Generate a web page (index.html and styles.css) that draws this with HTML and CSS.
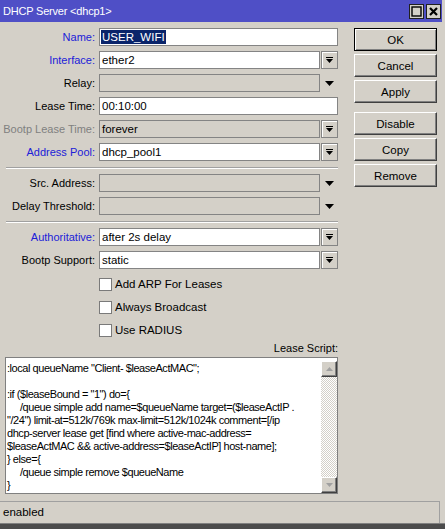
FILE: index.html
```html
<!DOCTYPE html>
<html lang="en">
<head>
    <meta charset="UTF-8">
    <title>DHCP Server &lt;dhcp1&gt;</title>
    <link rel="stylesheet" href="styles.css">
</head>
<body>
<div class="window">
    <div class="titlebar">
        <span class="title">DHCP Server &lt;dhcp1&gt;</span>
        <div class="title-buttons">
            <span class="tbtn"><svg width="11" height="11" viewBox="0 0 11 11"><rect x="1" y="1" width="9" height="9" fill="none" stroke="#000" stroke-width="1.4"/></svg></span>
            <span class="tbtn"><svg width="11" height="11" viewBox="0 0 11 11"><path d="M2 2 L9 9 M9 2 L2 9" stroke="#000" stroke-width="2.2"/></svg></span>
        </div>
    </div>

    <div class="main">
        <div class="form">
            <div class="row">
                <span class="lbl blue">Name:</span>
                <div class="field"><span class="sel">USER_WIFI</span></div>
            </div>
            <div class="row">
                <span class="lbl blue">Interface:</span>
                <div class="combo">
                    <div class="field">ether2</div>
                    <span class="dd"><svg width="7" height="6" viewBox="0 0 7 6"><rect x="0" y="0" width="7" height="1"/><path d="M0 2 H7 L3.5 6 Z"/></svg></span>
                </div>
            </div>
            <div class="row">
                <span class="lbl">Relay:</span>
                <div class="combo">
                    <div class="field off"></div>
                    <span class="dd-flat"><svg width="9" height="5" viewBox="0 0 9 5"><path d="M0 0 H9 L4.5 5 Z"/></svg></span>
                </div>
            </div>
            <div class="row">
                <span class="lbl">Lease Time:</span>
                <div class="field">00:10:00</div>
            </div>
            <div class="row">
                <span class="lbl gray">Bootp Lease Time:</span>
                <div class="combo">
                    <div class="field off">forever</div>
                    <span class="dd"><svg width="7" height="6" viewBox="0 0 7 6"><rect x="0" y="0" width="7" height="1"/><path d="M0 2 H7 L3.5 6 Z"/></svg></span>
                </div>
            </div>
            <div class="row">
                <span class="lbl blue">Address Pool:</span>
                <div class="combo">
                    <div class="field">dhcp_pool1</div>
                    <span class="dd"><svg width="7" height="6" viewBox="0 0 7 6"><rect x="0" y="0" width="7" height="1"/><path d="M0 2 H7 L3.5 6 Z"/></svg></span>
                </div>
            </div>

            <div class="separator"></div>

            <div class="row">
                <span class="lbl">Src. Address:</span>
                <div class="combo">
                    <div class="field off"></div>
                    <span class="dd-flat"><svg width="9" height="5" viewBox="0 0 9 5"><path d="M0 0 H9 L4.5 5 Z"/></svg></span>
                </div>
            </div>
            <div class="row">
                <span class="lbl">Delay Threshold:</span>
                <div class="combo">
                    <div class="field off"></div>
                    <span class="dd-flat"><svg width="9" height="5" viewBox="0 0 9 5"><path d="M0 0 H9 L4.5 5 Z"/></svg></span>
                </div>
            </div>

            <div class="separator"></div>

            <div class="row">
                <span class="lbl blue">Authoritative:</span>
                <div class="combo">
                    <div class="field">after 2s delay</div>
                    <span class="dd"><svg width="7" height="6" viewBox="0 0 7 6"><rect x="0" y="0" width="7" height="1"/><path d="M0 2 H7 L3.5 6 Z"/></svg></span>
                </div>
            </div>
            <div class="row">
                <span class="lbl">Bootp Support:</span>
                <div class="combo">
                    <div class="field">static</div>
                    <span class="dd"><svg width="7" height="6" viewBox="0 0 7 6"><rect x="0" y="0" width="7" height="1"/><path d="M0 2 H7 L3.5 6 Z"/></svg></span>
                </div>
            </div>

            <div class="checks">
                <div class="check"><span class="box"></span>Add ARP For Leases</div>
                <div class="check"><span class="box"></span>Always Broadcast</div>
                <div class="check"><span class="box"></span>Use RADIUS</div>
            </div>

            <div class="script-label">Lease Script:</div>
            <div class="script">
                <div class="script-text">
                    <div>:local queueName "Client- $leaseActMAC";</div>
                    <div>&nbsp;</div>
                    <div>:if ($leaseBound = "1") do={</div>
                    <div class="ind">/queue simple add name=$queueName target=($leaseActIP .</div>
                    <div>"/24") limit-at=512k/769k max-limit=512k/1024k comment=[/ip</div>
                    <div>dhcp-server lease get [find where active-mac-address=</div>
                    <div>$leaseActMAC &amp;&amp; active-address=$leaseActIP] host-name];</div>
                    <div>} else={</div>
                    <div class="ind">/queue simple remove $queueName</div>
                    <div>}</div>
                </div>
                <div class="scrollbar">
                    <span class="sb-btn"><svg width="7" height="4" viewBox="0 0 7 4"><path d="M3.5 0 L7 4 H0 Z" fill="#a0a0a0"/></svg></span>
                    <span class="sb-track"></span>
                    <span class="sb-btn"><svg width="7" height="4" viewBox="0 0 7 4"><path d="M0 0 H7 L3.5 4 Z" fill="#a0a0a0"/></svg></span>
                </div>
            </div>
        </div>

        <div class="actions">
            <button class="btn default">OK</button>
            <button class="btn">Cancel</button>
            <button class="btn">Apply</button>
            <button class="btn group">Disable</button>
            <button class="btn">Copy</button>
            <button class="btn">Remove</button>
        </div>
    </div>

    <div class="statusbar">enabled</div>
    <div class="edge"></div>
</div>
</body>
</html>
```

FILE: styles.css
```css
body {
    margin: 0;
    padding: 0;
    font-family: "Liberation Sans", Arial, sans-serif;
    font-size: 11px;
    color: #000;
    background-color: #d4d0c8;
}
.window {
    width: 445px;
    height: 529px;
    display: flex;
    flex-direction: column;
    background-color: #d4d0c8;
    overflow: hidden;
}
.titlebar {
    height: 22px;
    width: 442px;
    background-color: #4f4fc6;
    color: white;
    display: flex;
    align-items: center;
    justify-content: space-between;
    box-sizing: border-box;
    padding: 0 1px 0 3px;
}
.title {
    font-size: 11px;
    letter-spacing: -0.2px;
}
.title-buttons {
    display: flex;
    gap: 2px;
}
.tbtn {
    width: 15px;
    height: 15px;
    box-sizing: border-box;
    background-color: #d4d0c8;
    border: 1px solid #202020;
    display: flex;
    align-items: center;
    justify-content: center;
}
.main {
    display: flex;
    padding-top: 6px;
}
.form {
    width: 338px;
}
.row {
    display: flex;
    align-items: center;
    height: 18px;
    margin-bottom: 5px;
}
.lbl {
    width: 95px;
    margin-right: 4px;
    text-align: right;
    white-space: nowrap;
}
.blue {
    color: #2020d8;
}
.gray {
    color: #808080;
}
.field {
    width: 239px;
    height: 18px;
    box-sizing: border-box;
    border: 1px solid #848484;
    background-color: white;
    padding: 0 2px;
    line-height: 16px;
    font-size: 11.5px;
    white-space: nowrap;
    overflow: hidden;
}
.field.off {
    background-color: #d4d0c8;
}
.sel {
    background-color: #0a246a;
    color: white;
    display: inline-block;
    line-height: 14px;
    padding: 0 1px;
    margin-left: -1px;
}
.combo {
    display: flex;
}
.combo .field {
    width: 221px;
}
.dd {
    width: 17px;
    height: 18px;
    margin-left: 1px;
    box-sizing: border-box;
    border: 1px solid #848484;
    box-shadow: inset 1px 1px #fff;
    background-color: #d4d0c8;
    display: flex;
    align-items: center;
    justify-content: center;
}
.dd-flat {
    width: 17px;
    height: 18px;
    margin-left: 1px;
    display: flex;
    align-items: center;
    justify-content: center;
}
.separator {
    margin: 6px 0 5px 6px;
    border-top: 1px solid #a0a0a0;
    border-bottom: 1px solid #fff;
}
.checks {
    padding-top: 1px;
    padding-left: 99px;
}
.check {
    display: flex;
    align-items: center;
    height: 18px;
    margin-bottom: 5px;
    font-size: 11.5px;
}
.box {
    width: 13px;
    height: 13px;
    box-sizing: border-box;
    background-color: white;
    border: 1px solid #7a7a7a;
    margin-right: 3px;
}
.script-label {
    text-align: right;
    height: 14px;
    line-height: 14px;
    margin-top: -3px;
    margin-bottom: 2px;
}
.script {
    margin-left: 5px;
    width: 333px;
    height: 137px;
    box-sizing: border-box;
    border: 1px solid #808080;
    background-color: white;
    display: flex;
}
.script-text {
    flex: 1;
    padding: 4px 0 0 1px;
    font-size: 11px;
    line-height: 13px;
    letter-spacing: -0.45px;
    overflow: hidden;
}
.script-text div {
    white-space: nowrap;
}
.script-text .ind {
    padding-left: 13px;
}
.scrollbar {
    width: 16px;
    margin-top: 3px;
    display: flex;
    flex-direction: column;
}
.sb-btn {
    height: 16px;
    box-sizing: border-box;
    background-color: #d4d0c8;
    border: 1px solid;
    border-color: #fff #404040 #404040 #fff;
    box-shadow: inset -1px -1px #808080;
    display: flex;
    align-items: center;
    justify-content: center;
}
.sb-track {
    flex: 1;
    background-image: repeating-conic-gradient(#ffffff 0 25%, #d4d0c8 0 50%);
    background-size: 2px 2px;
}
.actions {
    margin-left: 16px;
    width: 83px;
    display: flex;
    flex-direction: column;
}
.btn {
    height: 23px;
    margin-bottom: 3px;
    font-family: "Liberation Sans", Arial, sans-serif;
    font-size: 11.5px;
    color: #000;
    background-color: #d4d0c8;
    border: 1px solid;
    border-color: #fff #404040 #404040 #fff;
    box-shadow: inset -1px -1px #808080;
    padding: 0;
}
.btn.default {
    border-color: #000;
    box-shadow: inset 1px 1px #fff, inset -1px -1px #808080;
}
.btn.group {
    margin-top: 6px;
}
.statusbar {
    margin-top: 7px;
    width: 440px;
    height: 22px;
    box-sizing: border-box;
    border-top: 1px solid #a0a0a0;
    border-right: 1px solid #a0a0a0;
    padding-left: 3px;
    line-height: 20px;
    font-size: 11.5px;
}
.edge {
    flex: 1;
    border-top: 1px solid #808080;
    background-color: #4c4c4c;
}
```
